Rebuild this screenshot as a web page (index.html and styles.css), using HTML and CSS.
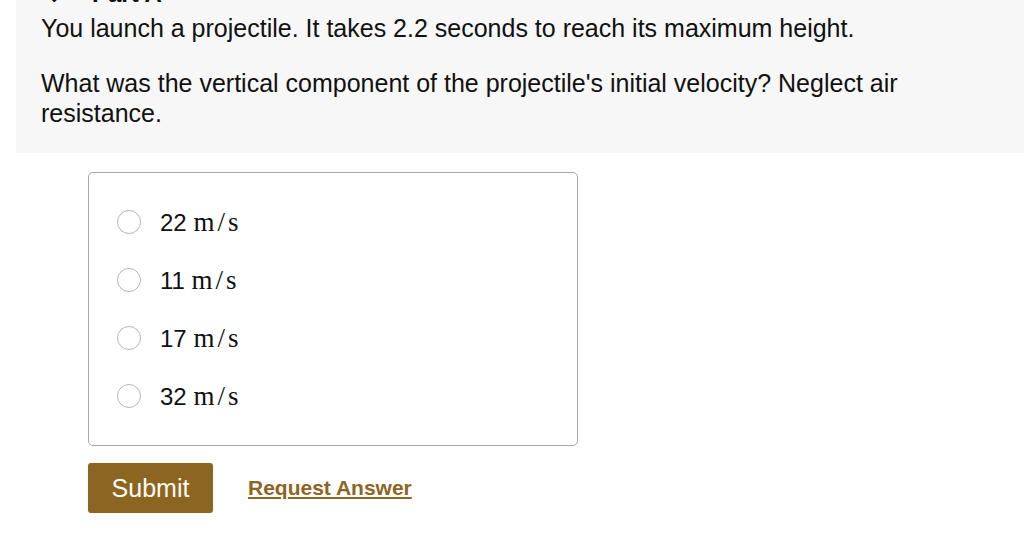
FILE: index.html
```html
<!DOCTYPE html>
<html>
<head>
<meta charset="utf-8">
<link rel="stylesheet" href="styles.css">
</head>
<body>
<div class="prompt">
  <div class="part-head">
    <span class="chev">&#8964;</span>
    <span class="part-title">Part A</span>
  </div>
  <p class="q">You launch a projectile. It takes 2.2 seconds to reach its maximum height.</p>
  <p class="q q2">What was the vertical component of the projectile's initial velocity? Neglect air resistance.</p>
</div>
<div class="choices">
  <label class="opt"><span class="radio"></span><span class="val">22 <span class="unit">m/s</span></span></label>
  <label class="opt"><span class="radio"></span><span class="val">11 <span class="unit">m/s</span></span></label>
  <label class="opt"><span class="radio"></span><span class="val">17 <span class="unit">m/s</span></span></label>
  <label class="opt"><span class="radio"></span><span class="val">32 <span class="unit">m/s</span></span></label>
</div>
<div class="actions">
  <button class="submit">Submit</button>
  <a class="req" href="#">Request Answer</a>
</div>
</body>
</html>
```
FILE: styles.css
```css
html, body {
  margin: 0;
  padding: 0;
  background: #fff;
}
body {
  font-family: "Liberation Sans", Arial, sans-serif;
  color: #111;
  overflow: hidden;
}
.prompt {
  margin-left: 16px;
  background: #f7f7f7;
  height: 153px;
  padding-left: 25px;
  box-sizing: border-box;
  overflow: hidden;
}
.part-head {
  display: flex;
  align-items: baseline;
  height: 28px;
  margin-top: -18px;
  line-height: 24px;
}
.chev {
  font-size: 22px;
  margin-left: 4px;
  width: 47px;
}
.part-title {
  font-weight: bold;
  font-size: 24px;
}
.q {
  margin: 0;
  font-size: 25px;
  line-height: 30px;
  width: 900px;
}
.part-head + .q {
  margin-top: 3px;
}
.q2 {
  margin-top: 25px;
}
.choices {
  margin: 19px 0 0 88px;
  width: 490px;
  box-sizing: border-box;
  border: 1px solid #a9a9a9;
  border-radius: 5px;
  padding: 20px 0 20px 28px;
}
.opt {
  display: flex;
  align-items: center;
  height: 58px;
}
.radio {
  width: 22px;
  height: 22px;
  border: 1px solid #b5b5b5;
  border-radius: 50%;
  background: #fff;
  margin-right: 19px;
  flex: none;
}
.val {
  font-size: 24px;
  color: #111;
}
.unit {
  font-family: "Liberation Serif", "Times New Roman", serif;
  font-size: 27px;
  letter-spacing: 3px;
}
.actions {
  display: flex;
  align-items: center;
  margin: 17px 0 0 88px;
  gap: 35px;
}
.submit {
  width: 125px;
  height: 50px;
  background: #8c6523;
  color: #fffaf0;
  border: none;
  border-radius: 3px;
  font-family: "Liberation Sans", Arial, sans-serif;
  font-size: 25px;
  padding: 0;
}
.req {
  color: #8c6523;
  font-weight: bold;
  font-size: 21px;
  text-decoration: underline;
}
```
